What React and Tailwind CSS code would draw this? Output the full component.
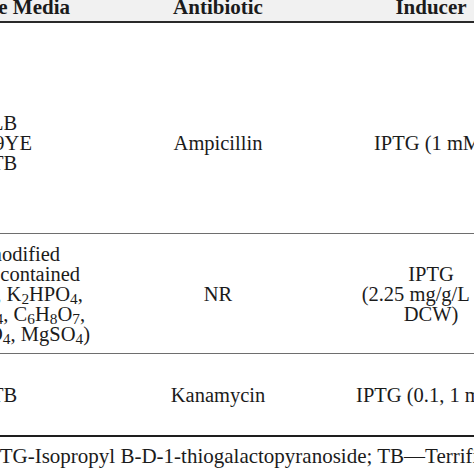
import React from "react";

// rows of the cropped expression table
const rows = [
  {
    h: "h-[211px] pt-[30px] border-b border-[#6e6e6e]",
    media: ["LB", "M9YE", "TB"],
    antibiotic: "Ampicillin",
    inducer: ["IPTG (1 mM)"],
  },
  {
    h: "h-[120px] border-b border-[#6e6e6e]",
    media: [
      "TB (modified",
      "medium contained",
      <>KH<sub>2</sub>PO<sub>4</sub>, K<sub>2</sub>HPO<sub>4</sub>,</>,
      <>Na<sub>2</sub>HPO<sub>4</sub>, C<sub>6</sub>H<sub>8</sub>O<sub>7</sub>,</>,
      <>(NH<sub>4</sub>)<sub>2</sub>SO<sub>4</sub>, MgSO<sub>4</sub>)</>,
    ],
    antibiotic: "NR",
    inducer: ["IPTG", "(2.25 mg/g/L per", "DCW)"],
  },
  {
    h: "h-[83px] border-b-2 border-[#1e1e1e]",
    media: ["TB"],
    antibiotic: "Kanamycin",
    inducer: ["IPTG (0.1, 1 mM)"],
  },
];

function Lines({ lines }) {
  return (
    <div className="flex flex-col items-center">
      {lines.map((l, i) => (
        <span key={i} className="whitespace-nowrap">{l}</span>
      ))}
    </div>
  );
}

export default function App() {
  return (
    <div className="w-[474px] h-[474px] overflow-hidden bg-white text-[#1b1b1b] font-['Liberation_Serif',serif]">
      <div className="-ml-[106px] w-[646px]">
        {/* header */}
        <div className="flex h-[23px] items-start bg-[#f1f1f1] border-b-2 border-[#2a2a2a] text-[21px] font-bold leading-[14px]">
          <div className="w-[220px] text-center whitespace-nowrap">Culture Media</div>
          <div className="w-[208px] text-center">Antibiotic</div>
          <div className="w-[218px] text-center">Inducer</div>
        </div>

        {rows.map((r, i) => (
          <div key={i} className={`flex items-center text-[20.5px] leading-[20px] ${r.h}`}>
            <div className="w-[220px] flex justify-center">
              <Lines lines={r.media} />
            </div>
            <div className="w-[208px] text-center">{r.antibiotic}</div>
            <div className="w-[218px] flex justify-center">
              <Lines lines={r.inducer} />
            </div>
          </div>
        ))}

        {/* footnote */}
        <p className="ml-[87px] mt-[9px] text-[21px] leading-[20px] whitespace-nowrap">
          IPTG-Isopropyl B-D-1-thiogalactopyranoside; TB—Terrific Broth.
        </p>
      </div>
    </div>
  );
}
